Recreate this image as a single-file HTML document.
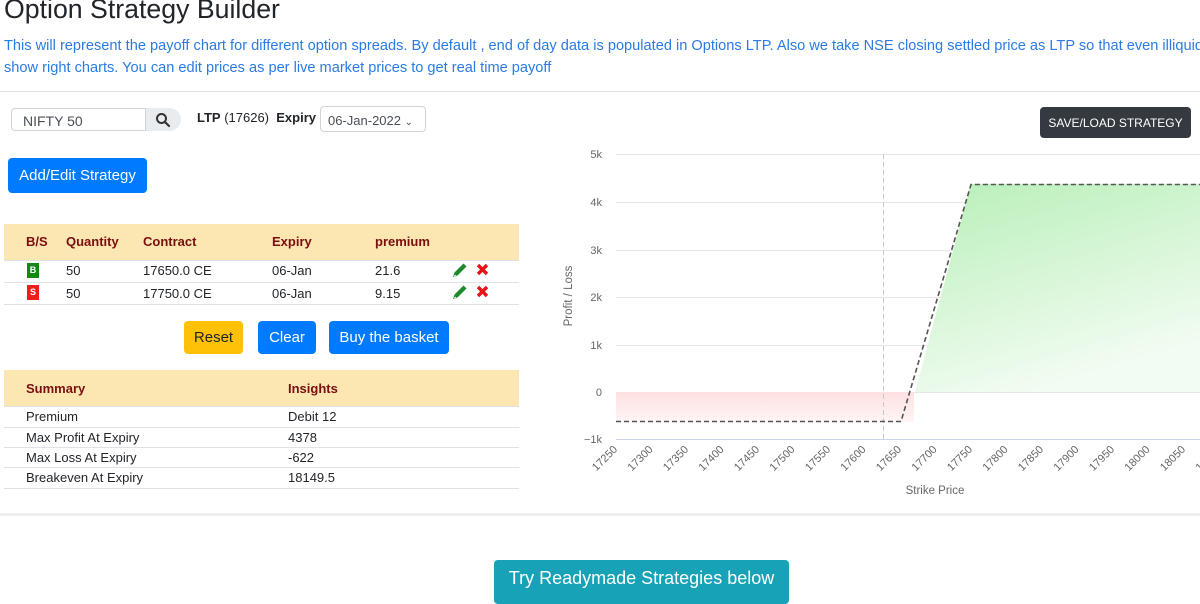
<!DOCTYPE html>
<html><head><meta charset="utf-8"><style>
body{margin:0;width:1200px;height:600px;overflow:hidden;background:#fff;font-family:"Liberation Sans",sans-serif;color:#212529;position:relative}
.a{position:absolute;white-space:nowrap}
.btn{position:absolute;border-radius:4px;color:#fff;display:flex;align-items:center;justify-content:center;font-size:15px}
.th{color:#7b0f0f;font-weight:bold;font-size:13px}
.td{font-size:13px}
.line{position:absolute;left:4px;width:515px;height:1px;background:#dee2e6}
</style></head><body>
<div class="a" style="left:4px;top:-6px;font-size:26.7px;color:#212529">Option Strategy Builder</div>
<div class="a" style="left:4px;top:35px;font-size:14.6px;color:#2a7be4;line-height:22px">This will represent the payoff chart for different option spreads. By default , end of day data is populated in Options LTP. Also we take NSE closing settled price as LTP so that even illiquid<br>show right charts. You can edit prices as per live market prices to get real time payoff</div>
<div class="a" style="left:0;top:91px;width:1200px;height:1px;background:#dee2e6"></div>

<div class="a" style="left:11px;top:108px;width:135px;height:23px;border:1px solid #ced4da;border-radius:4px 0 0 4px;box-sizing:border-box;font-size:14px;padding:4px 11px;color:#495057">NIFTY 50</div>
<div class="a" style="left:146px;top:108px;width:35px;height:23px;background:#e9ecef;border-radius:0 12px 12px 0"></div>
<svg class="a" style="left:155px;top:112px" width="16" height="16" viewBox="0 0 16 16"><circle cx="6.5" cy="6.5" r="4.5" fill="none" stroke="#333" stroke-width="2"/><path d="M10 10l4 4" stroke="#333" stroke-width="2.2" stroke-linecap="round"/></svg>
<div class="a" style="left:197px;top:110px;font-size:13px"><b>LTP</b> (17626) &nbsp;<b>Expiry</b></div>
<div class="a" style="left:320px;top:106px;width:106px;height:26px;border:1px solid #ced4da;border-radius:4px;box-sizing:border-box;font-size:13px;padding:6px 7px;color:#495057">06-Jan-2022 <span style="font-size:10px">&#8964;</span></div>
<div class="btn" style="left:1040px;top:107px;width:151px;height:31px;background:#343a40;font-size:12px">SAVE/LOAD STRATEGY</div>

<div class="btn" style="left:8px;top:158px;width:139px;height:35px;background:#007bff">Add/Edit Strategy</div>

<div class="a" style="left:4px;top:224px;width:515px;height:36px;background:#fce6b2"></div>
<div class="a th" style="left:26px;top:234px">B/S</div>
<div class="a th" style="left:66px;top:234px">Quantity</div>
<div class="a th" style="left:143px;top:234px">Contract</div>
<div class="a th" style="left:272px;top:234px">Expiry</div>
<div class="a th" style="left:375px;top:234px">premium</div>
<div class="line" style="top:260px"></div><div class="line" style="top:282px"></div><div class="line" style="top:304px"></div>
<div class="a" style="left:27px;top:263px;width:12px;height:15px;background:#118a11;color:#fff;font-size:9px;font-weight:bold;text-align:center;line-height:15px">B</div>
<div class="a" style="left:27px;top:285px;width:12px;height:15px;background:#f31b1b;color:#fff;font-size:9px;font-weight:bold;text-align:center;line-height:15px">S</div>
<div class="a td" style="left:66px;top:263px">50</div><div class="a td" style="left:143px;top:263px">17650.0 CE</div><div class="a td" style="left:272px;top:263px">06-Jan</div><div class="a td" style="left:375px;top:263px">21.6</div>
<div class="a td" style="left:66px;top:286px">50</div><div class="a td" style="left:143px;top:286px">17750.0 CE</div><div class="a td" style="left:272px;top:286px">06-Jan</div><div class="a td" style="left:375px;top:286px">9.15</div>
<svg class="a" style="left:452px;top:262px" width="40" height="42" viewBox="0 0 40 42">
<g id="ic"><path d="M1 15l1.5-4.5 9-9 3 3-9 9z" fill="#1c8a2a"/><path d="M2 14l2-1" stroke="#fff" stroke-width="0.8"/><path d="M26 3l9 9M35 3l-9 9" stroke="#e8141a" stroke-width="3.4"/></g>
<use href="#ic" y="22"/></svg>

<div class="btn" style="left:184px;top:321px;width:59px;height:33px;background:#ffc107;color:#212529">Reset</div>
<div class="btn" style="left:258px;top:321px;width:58px;height:33px;background:#007bff">Clear</div>
<div class="btn" style="left:329px;top:321px;width:120px;height:33px;background:#007bff">Buy the basket</div>

<div class="a" style="left:4px;top:370px;width:515px;height:36px;background:#fce6b2"></div>
<div class="a th" style="left:26px;top:381px">Summary</div>
<div class="a th" style="left:288px;top:381px">Insights</div>
<div class="line" style="top:406px"></div><div class="line" style="top:427px"></div><div class="line" style="top:447px"></div><div class="line" style="top:467px"></div><div class="line" style="top:488px"></div>
<div class="a td" style="left:26px;top:409px">Premium</div><div class="a td" style="left:288px;top:409px">Debit 12</div>
<div class="a td" style="left:26px;top:430px">Max Profit At Expiry</div><div class="a td" style="left:288px;top:430px">4378</div>
<div class="a td" style="left:26px;top:450px">Max Loss At Expiry</div><div class="a td" style="left:288px;top:450px">-622</div>
<div class="a td" style="left:26px;top:470px">Breakeven At Expiry</div><div class="a td" style="left:288px;top:470px">18149.5</div>

<svg class="a" style="left:0;top:0" width="1200" height="600" font-family="Liberation Sans, sans-serif">
<defs>
<linearGradient id="g" x1="0" y1="0" x2="0.4" y2="1"><stop offset="0" stop-color="#b8efb8"/><stop offset="1" stop-color="#f2fcf2"/></linearGradient>
<linearGradient id="r" x1="0" y1="0" x2="0" y2="1"><stop offset="0" stop-color="#fde0e0"/><stop offset="1" stop-color="#fff5f5"/></linearGradient>
</defs>
<g stroke="#e6e6e6" stroke-width="1">
<line x1="616" y1="154.5" x2="1200" y2="154.5"/><line x1="616" y1="202.5" x2="1200" y2="202.5"/><line x1="616" y1="250.5" x2="1200" y2="250.5"/><line x1="616" y1="297.5" x2="1200" y2="297.5"/><line x1="616" y1="345.5" x2="1200" y2="345.5"/><line x1="616" y1="392.5" x2="1200" y2="392.5"/>
</g>
<rect x="616" y="392" width="298" height="30" fill="url(#r)"/>
<path d="M915 392 L971 184 L1200 184 L1200 392 Z" fill="url(#g)"/>
<line x1="616" y1="439.5" x2="1200" y2="439.5" stroke="#ccd6eb"/>
<line x1="883.5" y1="154" x2="883.5" y2="439" stroke="#c8c8c8" stroke-dasharray="5,3"/>
<path d="M616 421.5 L901 421.5 L971 184.5 L1200 184.5" fill="none" stroke="#555" stroke-width="1.6" stroke-dasharray="5,3"/>
<g font-size="11" fill="#666" text-anchor="end">
<text x="602" y="158">5k</text><text x="602" y="206">4k</text><text x="602" y="254">3k</text><text x="602" y="301">2k</text><text x="602" y="349">1k</text><text x="602" y="396">0</text><text x="602" y="443">−1k</text>
</g>
<g font-size="11" fill="#666" text-anchor="end">
<text transform="translate(618,450) rotate(-45)">17250</text>
<text transform="translate(653.5,450) rotate(-45)">17300</text>
<text transform="translate(689,450) rotate(-45)">17350</text>
<text transform="translate(724.5,450) rotate(-45)">17400</text>
<text transform="translate(760,450) rotate(-45)">17450</text>
<text transform="translate(795.5,450) rotate(-45)">17500</text>
<text transform="translate(831,450) rotate(-45)">17550</text>
<text transform="translate(866.5,450) rotate(-45)">17600</text>
<text transform="translate(902,450) rotate(-45)">17650</text>
<text transform="translate(937.5,450) rotate(-45)">17700</text>
<text transform="translate(973,450) rotate(-45)">17750</text>
<text transform="translate(1008.5,450) rotate(-45)">17800</text>
<text transform="translate(1044,450) rotate(-45)">17850</text>
<text transform="translate(1079.5,450) rotate(-45)">17900</text>
<text transform="translate(1115,450) rotate(-45)">17950</text>
<text transform="translate(1150.5,450) rotate(-45)">18000</text>
<text transform="translate(1186,450) rotate(-45)">18050</text>
<text transform="translate(1221.5,450) rotate(-45)">18100</text>
</g>
<text x="935" y="494" font-size="11.5" fill="#666" text-anchor="middle">Strike Price</text>
<text transform="translate(572,296) rotate(-90)" font-size="11.5" fill="#666" text-anchor="middle">Profit  /  Loss</text>
</svg>

<div class="a" style="left:0;top:513px;width:1200px;height:3px;background:#eceef0"></div>
<div class="btn" style="left:494px;top:560px;width:295px;height:44px;background:#17a2b8;font-size:18px;align-items:flex-start;padding-top:8px;box-sizing:border-box">Try Readymade Strategies below</div>
</body></html>
